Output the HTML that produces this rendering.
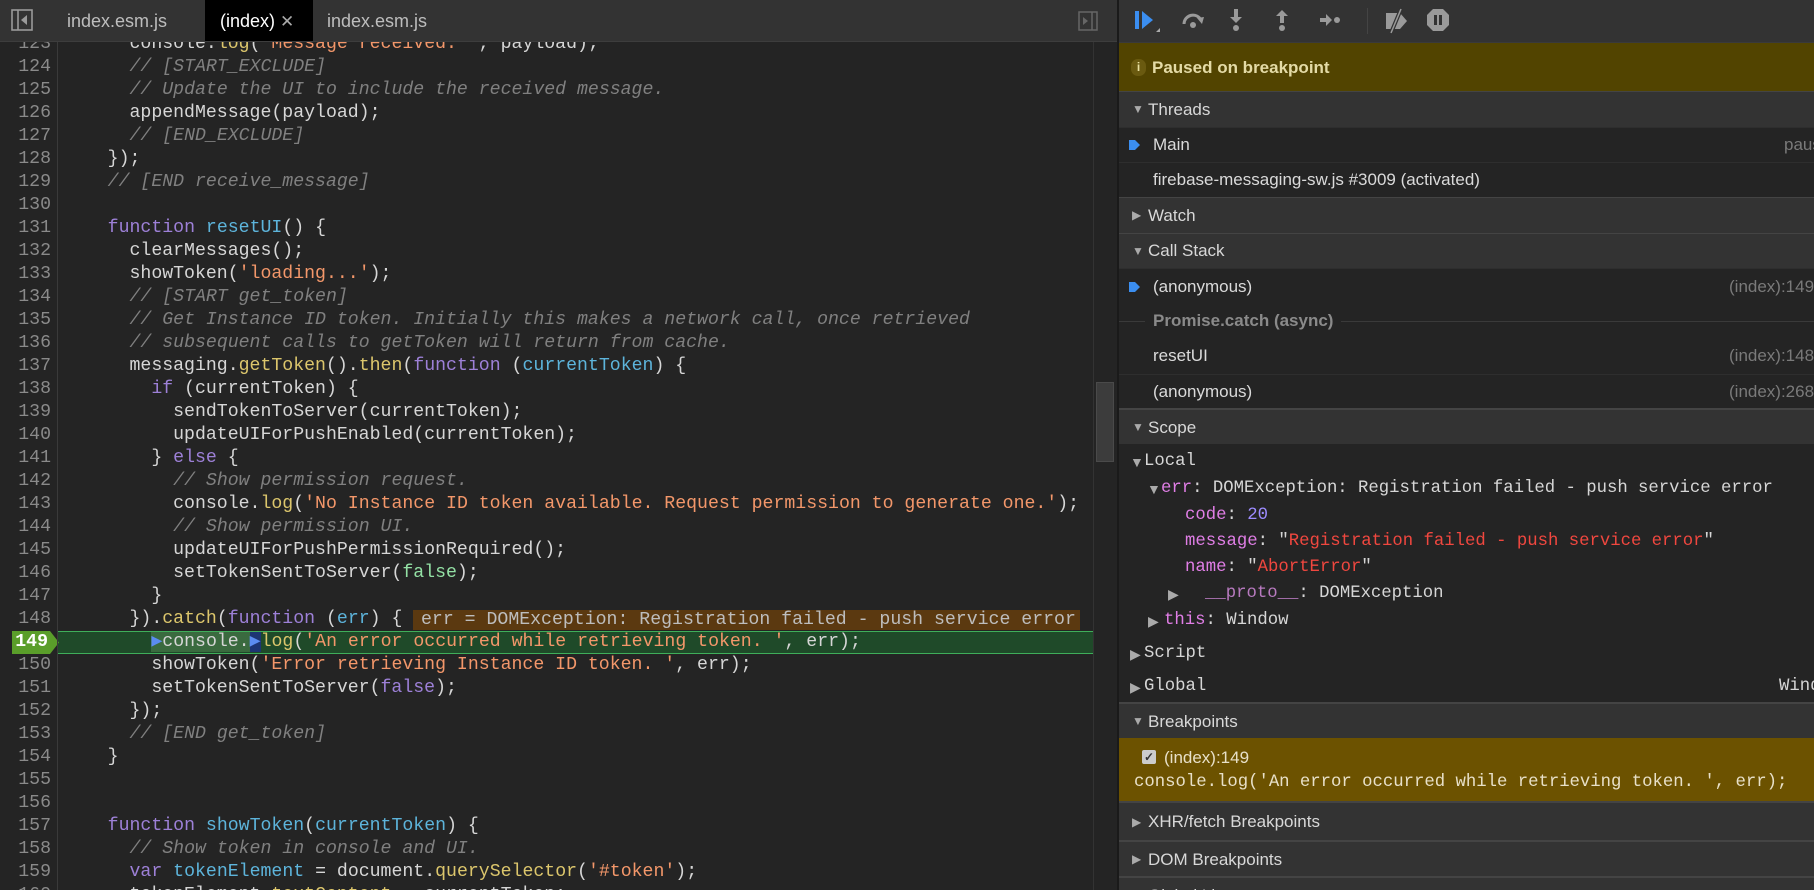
<!DOCTYPE html>
<html><head><meta charset="utf-8"><style>
*{margin:0;padding:0;box-sizing:border-box}
body{width:1814px;height:890px;overflow:hidden;background:#242424;font-family:"Liberation Sans",sans-serif;position:relative;color:#d4d4d4}
.abs{position:absolute}
#tabs{left:0;top:0;width:1117px;height:42px;background:#333;border-bottom:1px solid #3d3d3d}
.tab{position:absolute;top:0;height:41px;line-height:42px;font-size:18px;color:#bdbdbd}
#code{left:0;top:42px;width:1093px;height:848px;overflow:hidden}
#inner{position:absolute;left:0;top:-9.5px;width:1093px}
.ln{height:23px;line-height:23px;font-family:"Liberation Mono",monospace;font-size:18.2px;white-space:pre;position:relative}
.n{position:absolute;left:0;width:51px;text-align:right;color:#8a8a8a}
.t{position:absolute;left:64px;color:#d6d6d6}
#gut{left:57px;top:42px;width:1px;height:848px;background:#3a3a3a}
.k{color:#9d80d7}.f{color:#5db4db}.m{color:#dcc66c}.s{color:#f3976a}.c{color:#808080;font-style:italic}.b{color:#93e0a4}
#scroll{left:1093px;top:42px;width:24px;height:848px;background:#242424;border-left:1px solid #333}
#sep{left:1117px;top:0;width:2px;height:890px;background:#1a1a1a}
#rp{left:1119px;top:0;width:695px;height:890px;background:#242424;overflow:hidden}
.hdr{position:absolute;left:0;width:695px;background:#333;border-top:1px solid #444;font-size:17px;color:#d8d8d8}
.hdr .tri{position:absolute;left:13px;color:#aaa;font-size:12px}
.row{position:absolute;left:0;width:695px;font-size:17px;color:#dadada;border-top:1px solid #2e2e2e}
.mono{font-family:"Liberation Mono",monospace;font-size:17.3px;white-space:pre;position:absolute;color:#d6d6d6}
.pk{color:#e07ee6}
.tri2{position:absolute;color:#aaa;font-size:14px}
</style></head><body>
<div id="tabs" class="abs">
 <svg class="abs" style="left:11px;top:9px" width="22" height="22" viewBox="0 0 22 22"><rect x="1" y="1" width="20" height="20" fill="none" stroke="#9a9a9a" stroke-width="1.6"/><line x1="7" y1="1" x2="7" y2="21" stroke="#9a9a9a" stroke-width="1.6"/><path d="M16 6 L10 11 L16 16Z" fill="#9a9a9a"/></svg>
 <div class="tab" style="left:67px">index.esm.js</div>
 <div class="tab" style="left:205px;width:108px;background:#000;color:#fff;padding-left:15px">(index) <span style="color:#aaa;font-size:17px">✕</span></div>
 <div class="tab" style="left:327px">index.esm.js</div>
 <svg class="abs" style="left:1078px;top:11px" width="20" height="20" viewBox="0 0 20 20"><rect x="1" y="1" width="18" height="18" fill="none" stroke="#666" stroke-width="1.5"/><line x1="14" y1="1" x2="14" y2="19" stroke="#666" stroke-width="1.5"/><path d="M5 6 L10 10 L5 14Z" fill="#666"/></svg>
</div>
<div id="code" class="abs"><div id="inner">
<div class="ln"><span class="n">123</span><span class="t">      console.<span class="m">log</span>(<span class="s">'Message received. '</span>, payload);</span></div>
<div class="ln"><span class="n">124</span><span class="t">      <span class="c">// [START_EXCLUDE]</span></span></div>
<div class="ln"><span class="n">125</span><span class="t">      <span class="c">// Update the UI to include the received message.</span></span></div>
<div class="ln"><span class="n">126</span><span class="t">      appendMessage(payload);</span></div>
<div class="ln"><span class="n">127</span><span class="t">      <span class="c">// [END_EXCLUDE]</span></span></div>
<div class="ln"><span class="n">128</span><span class="t">    });</span></div>
<div class="ln"><span class="n">129</span><span class="t">    <span class="c">// [END receive_message]</span></span></div>
<div class="ln"><span class="n">130</span><span class="t"></span></div>
<div class="ln"><span class="n">131</span><span class="t">    <span class="k">function</span> <span class="f">resetUI</span>() {</span></div>
<div class="ln"><span class="n">132</span><span class="t">      clearMessages();</span></div>
<div class="ln"><span class="n">133</span><span class="t">      showToken(<span class="s">'loading...'</span>);</span></div>
<div class="ln"><span class="n">134</span><span class="t">      <span class="c">// [START get_token]</span></span></div>
<div class="ln"><span class="n">135</span><span class="t">      <span class="c">// Get Instance ID token. Initially this makes a network call, once retrieved</span></span></div>
<div class="ln"><span class="n">136</span><span class="t">      <span class="c">// subsequent calls to getToken will return from cache.</span></span></div>
<div class="ln"><span class="n">137</span><span class="t">      messaging.<span class="m">getToken</span>().<span class="m">then</span>(<span class="k">function</span> (<span class="f">currentToken</span>) {</span></div>
<div class="ln"><span class="n">138</span><span class="t">        <span class="k">if</span> (currentToken) {</span></div>
<div class="ln"><span class="n">139</span><span class="t">          sendTokenToServer(currentToken);</span></div>
<div class="ln"><span class="n">140</span><span class="t">          updateUIForPushEnabled(currentToken);</span></div>
<div class="ln"><span class="n">141</span><span class="t">        } <span class="k">else</span> {</span></div>
<div class="ln"><span class="n">142</span><span class="t">          <span class="c">// Show permission request.</span></span></div>
<div class="ln"><span class="n">143</span><span class="t">          console.<span class="m">log</span>(<span class="s">'No Instance ID token available. Request permission to generate one.'</span>);</span></div>
<div class="ln"><span class="n">144</span><span class="t">          <span class="c">// Show permission UI.</span></span></div>
<div class="ln"><span class="n">145</span><span class="t">          updateUIForPushPermissionRequired();</span></div>
<div class="ln"><span class="n">146</span><span class="t">          setTokenSentToServer(<span class="b">false</span>);</span></div>
<div class="ln"><span class="n">147</span><span class="t">        }</span></div>
<div class="ln"><span class="n">148</span><span class="t">      }).<span class="m">catch</span>(<span class="k">function</span> (<span class="f">err</span>) {</span><span style="position:absolute;left:413px;top:2px;width:667px;height:20px;line-height:20px;background:#5b3910;color:#bdbdbd;padding-left:8px">err = DOMException: Registration failed - push service error</span></div>
<div class="ln" style="background:#1f4a29;border-top:1px solid #3fae5a;border-bottom:1px solid #3fae5a;margin-left:58px;line-height:21px"><svg style="position:absolute;left:-46px;top:-1px" width="48" height="23"><path d="M0 0H38L47 11.5L38 23H0Z" fill="#5a9e2a"/></svg><span style="position:absolute;left:-46px;width:36px;text-align:right;color:#fff;font-weight:bold">149</span><span class="t" style="left:6px">        <span style="background:#3a6a3f"><span style="color:#5b8cf0">▶</span>console.</span><span style="background:#1d3573;color:#5b8cf0">▶</span><span class="m">log</span>(<span class="s">'An error occurred while retrieving token. '</span>, err);</span></div>
<div class="ln"><span class="n">150</span><span class="t">        showToken(<span class="s">'Error retrieving Instance ID token. '</span>, err);</span></div>
<div class="ln"><span class="n">151</span><span class="t">        setTokenSentToServer(<span class="k">false</span>);</span></div>
<div class="ln"><span class="n">152</span><span class="t">      });</span></div>
<div class="ln"><span class="n">153</span><span class="t">      <span class="c">// [END get_token]</span></span></div>
<div class="ln"><span class="n">154</span><span class="t">    }</span></div>
<div class="ln"><span class="n">155</span><span class="t"></span></div>
<div class="ln"><span class="n">156</span><span class="t"></span></div>
<div class="ln"><span class="n">157</span><span class="t">    <span class="k">function</span> <span class="f">showToken</span>(<span class="f">currentToken</span>) {</span></div>
<div class="ln"><span class="n">158</span><span class="t">      <span class="c">// Show token in console and UI.</span></span></div>
<div class="ln"><span class="n">159</span><span class="t">      <span class="k">var</span> <span class="f">tokenElement</span> = document.<span class="m">querySelector</span>(<span class="s">'#token'</span>);</span></div>
<div class="ln"><span class="n">160</span><span class="t">      tokenElement.<span class="m">textContent</span> = currentToken;</span></div>
</div></div>
<div id="gut" class="abs"></div>
<div id="scroll" class="abs"><div class="abs" style="left:2px;top:340px;width:18px;height:80px;background:#3c3c3c;border:1px solid #4a4a4a"></div></div>
<div id="sep" class="abs"></div>
<div id="rp" class="abs">
 <div class="abs" style="left:0;top:0;width:695px;height:42px;background:#333"></div>
 <svg class="abs" style="left:14px;top:9px" width="30" height="26" viewBox="0 0 30 26"><rect x="2" y="2" width="4" height="18" fill="#3b8ef0"/><path d="M9 2L20 11L9 20Z" fill="#3b8ef0"/><path d="M23 23L27 19V23Z" fill="#aaa"/></svg>
 <svg class="abs" style="left:61px;top:10px" width="26" height="20" viewBox="0 0 26 20"><path d="M4 14A9 9 0 0 1 21 10" fill="none" stroke="#9a9a9a" stroke-width="3"/><path d="M17 8L24 7L22 14Z" fill="#9a9a9a"/><circle cx="13" cy="15" r="3" fill="#9a9a9a"/></svg>
 <svg class="abs" style="left:109px;top:8px" width="16" height="24" viewBox="0 0 16 24"><rect x="6" y="1" width="4" height="9" fill="#9a9a9a"/><path d="M2 9H14L8 15Z" fill="#9a9a9a"/><circle cx="8" cy="20" r="3" fill="#9a9a9a"/></svg>
 <svg class="abs" style="left:155px;top:8px" width="16" height="24" viewBox="0 0 16 24"><path d="M2 8H14L8 2Z" fill="#9a9a9a"/><rect x="6" y="7" width="4" height="8" fill="#9a9a9a"/><circle cx="8" cy="20" r="3" fill="#9a9a9a"/></svg>
 <svg class="abs" style="left:200px;top:10px" width="24" height="20" viewBox="0 0 24 20"><rect x="1" y="8" width="7" height="4" fill="#9a9a9a"/><path d="M7 4L13 10L7 16Z" fill="#9a9a9a"/><circle cx="18" cy="10" r="3" fill="#9a9a9a"/></svg>
 <div class="abs" style="left:248px;top:8px;width:1px;height:26px;background:#444"></div>
 <svg class="abs" style="left:265px;top:8px" width="26" height="26" viewBox="0 0 26 26"><path d="M2 5H16L23 13L16 21H2Z" fill="#9a9a9a"/><line x1="17" y1="1" x2="7" y2="25" stroke="#333" stroke-width="4"/><line x1="17" y1="1" x2="7" y2="25" stroke="#9a9a9a" stroke-width="1.5"/></svg>
 <svg class="abs" style="left:307px;top:8px" width="24" height="24" viewBox="0 0 24 24"><path d="M7 1H17L23 7V17L17 23H7L1 17V7Z" fill="#9a9a9a"/><rect x="8" y="7" width="3" height="10" fill="#333"/><rect x="13" y="7" width="3" height="10" fill="#333"/></svg>

 <div class="abs" style="left:0;top:42px;width:695px;height:49px;background:#524400;border-top:1px solid #3a3a3a"></div>
 <div class="abs" style="left:12px;top:59px;width:15px;height:17px;border-radius:7px;background:#6a5a10;color:#e8e0a0;font-size:12px;font-weight:bold;text-align:center;line-height:17px">i</div>
 <div class="abs" style="left:33px;top:58px;font-size:17px;font-weight:bold;color:#e4dba6">Paused on breakpoint</div>

 <div class="hdr" style="top:91px;height:36px;line-height:35px"><span class="tri">▼</span><span style="position:absolute;left:29px">Threads</span></div>
 <div class="row" style="top:127px;height:35px;line-height:34px"><svg class="abs" style="left:10px;top:10px" width="12" height="14"><path d="M0 2H6L11 7L6 12H0Z" fill="#3b8ef0"/></svg><span style="position:absolute;left:34px">Main</span><span style="position:absolute;left:665px;color:#7a7a7a">paused</span></div>
 <div class="row" style="top:162px;height:35px;line-height:34px"><span style="position:absolute;left:34px">firebase-messaging-sw.js #3009 (activated)</span></div>
 <div class="hdr" style="top:197px;height:36px;line-height:35px"><span class="tri">▶</span><span style="position:absolute;left:29px">Watch</span></div>
 <div class="hdr" style="top:233px;height:35px;line-height:34px"><span class="tri">▼</span><span style="position:absolute;left:29px">Call Stack</span></div>
 <div class="row" style="top:268px;height:36px;line-height:35px"><svg class="abs" style="left:10px;top:11px" width="12" height="14"><path d="M0 2H6L11 7L6 12H0Z" fill="#3b8ef0"/></svg><span style="position:absolute;left:34px">(anonymous)</span><span style="position:absolute;left:610px;color:#7a7a7a">(index):149</span></div>
 <div class="row" style="top:304px;height:34px;line-height:34px;border-top:none"><div class="abs" style="left:0;top:17px;width:695px;height:1px;background:#3a3a3a"></div><span style="position:absolute;left:26px;padding:0 8px;background:#242424;color:#8a8a8a;font-weight:bold">Promise.catch (async)</span></div>
 <div class="row" style="top:338px;height:36px;line-height:35px;border-top:none"><span style="position:absolute;left:34px">resetUI</span><span style="position:absolute;left:610px;color:#7a7a7a">(index):148</span></div>
 <div class="row" style="top:374px;height:34px;line-height:34px"><span style="position:absolute;left:34px">(anonymous)</span><span style="position:absolute;left:610px;color:#7a7a7a">(index):268</span></div>
 <div class="hdr" style="top:408px;height:36px;line-height:35px;border-top:2px solid #444"><span class="tri">▼</span><span style="position:absolute;left:29px">Scope</span></div>

 <span class="tri2" style="left:11px;top:454px">▼</span><span class="mono" style="left:25px;top:452px">Local</span>
 <span class="tri2" style="left:28px;top:481px">▼</span><span class="mono" style="left:42px;top:479px"><span class="pk">err</span>: DOMException: Registration failed - push service error</span>
 <span class="mono" style="left:66px;top:506px"><span class="pk">code</span>: <span style="color:#9d8cff">20</span></span>
 <span class="mono" style="left:66px;top:532px"><span class="pk">message</span>: "<span style="color:#f0473f">Registration failed - push service error</span>"</span>
 <span class="mono" style="left:66px;top:558px"><span class="pk">name</span>: "<span style="color:#f0473f">AbortError</span>"</span>
 <span class="tri2" style="left:49px;top:586px">▶</span><span class="mono" style="left:86px;top:584px"><span style="color:#b87ac0">__proto__</span>: DOMException</span>
 <span class="tri2" style="left:29px;top:613px">▶</span><span class="mono" style="left:45px;top:611px"><span class="pk">this</span>: Window</span>
 <span class="tri2" style="left:11px;top:646px">▶</span><span class="mono" style="left:25px;top:644px">Script</span>
 <span class="tri2" style="left:11px;top:679px">▶</span><span class="mono" style="left:25px;top:677px">Global</span><span class="mono" style="left:660px;top:677px">Window</span>

 <div class="hdr" style="top:702px;height:36px;line-height:35px;border-top:2px solid #444"><span class="tri">▼</span><span style="position:absolute;left:29px">Breakpoints</span></div>
 <div class="abs" style="left:0;top:738px;width:695px;height:63px;background:#6c5200"></div>
 <div class="abs" style="left:23px;top:750px;width:14px;height:14px;background:#ccc;border-radius:2px;color:#333;font-size:12px;line-height:14px;text-align:center;font-weight:bold">✓</div>
 <span class="abs" style="left:45px;top:748px;font-size:17px;color:#e8e0c8">(index):149</span>
 <span class="mono" style="left:15px;top:773px;color:#e8e0c8">console.log('An error occurred while retrieving token. ', err);</span>
 <div class="hdr" style="top:801px;height:39px;line-height:38px;border-top:2px solid #444"><span class="tri">▶</span><span style="position:absolute;left:29px">XHR/fetch Breakpoints</span></div>
 <div class="hdr" style="top:840px;height:36px;line-height:35px;border-top:2px solid #444"><span class="tri">▶</span><span style="position:absolute;left:29px">DOM Breakpoints</span></div>
 <div class="hdr" style="top:876px;height:36px;line-height:35px;border-top:2px solid #444"><span class="tri">▶</span><span style="position:absolute;left:29px">Global Listeners</span></div>
</div>
</body></html>
